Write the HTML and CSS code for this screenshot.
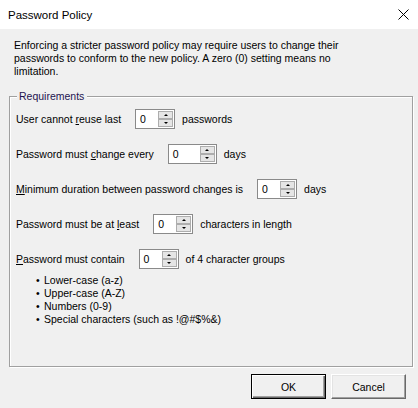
FILE: index.html
```html
<!DOCTYPE html>
<html>
<head>
<meta charset="utf-8">
<title>Password Policy</title>
<link rel="stylesheet" href="styles.css">
</head>
<body>
<div class="window">
  <div class="titlebar">
    <span class="title">Password Policy</span>
    <svg class="close" width="11" height="11" viewBox="0 0 11 11"><path d="M0.5 0.5 L10.5 10.5 M10.5 0.5 L0.5 10.5" stroke="#000" stroke-width="1" fill="none"/></svg>
  </div>
  <p class="intro">Enforcing a stricter password policy may require users to change their<br>passwords to conform to the new policy. A zero (0) setting means no<br>limitation.</p>
  <fieldset class="group">
    <legend class="group-title">Requirements</legend>
    <div class="row">
      <span class="label">User cannot <u>r</u>euse last</span>
      <div class="spin"><span class="spin-value">0</span><span class="spin-btns"><span class="spin-btn up"></span><span class="spin-btn down"></span></span></div>
      <span class="suffix">passwords</span>
    </div>
    <div class="row">
      <span class="label">Password must <u>c</u>hange every</span>
      <div class="spin wide"><span class="spin-value">0</span><span class="spin-btns"><span class="spin-btn up"></span><span class="spin-btn down"></span></span></div>
      <span class="suffix">days</span>
    </div>
    <div class="row">
      <span class="label"><u>M</u>inimum duration between password changes is</span>
      <div class="spin"><span class="spin-value">0</span><span class="spin-btns"><span class="spin-btn up"></span><span class="spin-btn down"></span></span></div>
      <span class="suffix">days</span>
    </div>
    <div class="row">
      <span class="label">Password must be at <u>l</u>east</span>
      <div class="spin"><span class="spin-value">0</span><span class="spin-btns"><span class="spin-btn up"></span><span class="spin-btn down"></span></span></div>
      <span class="suffix">characters in length</span>
    </div>
    <div class="row">
      <span class="label"><u>P</u>assword must contain</span>
      <div class="spin"><span class="spin-value">0</span><span class="spin-btns"><span class="spin-btn up"></span><span class="spin-btn down"></span></span></div>
      <span class="suffix">of 4 character groups</span>
    </div>
    <ul class="groups">
      <li>Lower-case (a-z)</li>
      <li>Upper-case (A-Z)</li>
      <li>Numbers (0-9)</li>
      <li>Special characters (such as !@#$%&amp;)</li>
    </ul>
  </fieldset>
  <div class="footer">
    <button class="btn btn-default">OK</button>
    <button class="btn">Cancel</button>
  </div>
</div>
</body>
</html>
```

FILE: styles.css
```css
html, body {
  margin: 0;
  padding: 0;
}

body {
  font-family: "Liberation Sans", Arial, sans-serif;
  font-size: 10.5px;
  color: #000;
  background: #f0f0f0;
}

.window {
  width: 418px;
  height: 408px;
  display: flex;
  flex-direction: column;
  background: #f0f0f0;
  overflow: hidden;
}

.titlebar {
  height: 29px;
  flex: none;
  background: #fff;
  display: flex;
  align-items: center;
  justify-content: space-between;
  padding: 0 9px 0 8px;
}

.title {
  font-size: 11.5px;
  color: #000;
}

.close {
  display: block;
}

.intro {
  margin: 10px 14px 0;
  line-height: 13px;
}

.group {
  flex: 1;
  min-width: 0;
  margin: 12px 5px 0 9px;
  padding: 6px 0 0 6px;
  border: 1px solid #a0a0a0;
  box-shadow: 1px 1px 0 #fff, inset 1px 1px 0 #fff;
}

.group-title {
  margin-left: 1px;
  padding: 0 3px 0 2px;
  line-height: 13px;
  background: #f0f0f0;
  color: #1e1450;
}

.row {
  display: flex;
  align-items: center;
  height: 20px;
}

.row + .row {
  margin-top: 15px;
}

.spin {
  box-sizing: border-box;
  width: 40px;
  height: 20px;
  margin: 0 7px 0 14px;
  padding: 1px;
  display: flex;
  background: #fff;
  border: 1px solid #8a8a8a;
}

.spin.wide {
  width: 49px;
}

.spin-value {
  flex: 1;
  padding-left: 3px;
  line-height: 16px;
}

.spin-btns {
  width: 15px;
  display: flex;
  flex-direction: column;
}

.spin-btn {
  box-sizing: border-box;
  height: 8px;
  border: 1px solid #adadad;
  background: #e5e5e5;
  display: flex;
  align-items: center;
  justify-content: center;
}

.spin-btn::after {
  content: "";
  width: 0;
  height: 0;
  border-left: 2px solid transparent;
  border-right: 2px solid transparent;
}

.spin-btn.up::after {
  border-bottom: 2px solid #000;
}

.spin-btn.down::after {
  border-top: 2px solid #000;
}

.groups {
  list-style: none;
  margin: 5px 0 0;
  padding: 0 0 0 20px;
  line-height: 13px;
}

.groups li::before {
  content: "\2022";
  display: inline-block;
  width: 8px;
}

.footer {
  flex: none;
  display: flex;
  justify-content: flex-end;
  gap: 5px;
  padding: 7px 12px 9px 0;
}

.btn {
  box-sizing: border-box;
  width: 75px;
  height: 25px;
  padding: 0;
  font-family: "Liberation Sans", Arial, sans-serif;
  font-size: 10.5px;
  color: #000;
  background: #f0f0f0;
  border: 1px solid;
  border-color: #fff #696969 #696969 #fff;
  box-shadow: inset -1px -1px 0 #a0a0a0, inset 1px 1px 0 #e3e3e3;
}

.btn-default {
  border-color: #000;
  box-shadow: inset 1px 1px 0 #fff, inset -1px -1px 0 #696969, inset -2px -2px 0 #a0a0a0;
}
```
